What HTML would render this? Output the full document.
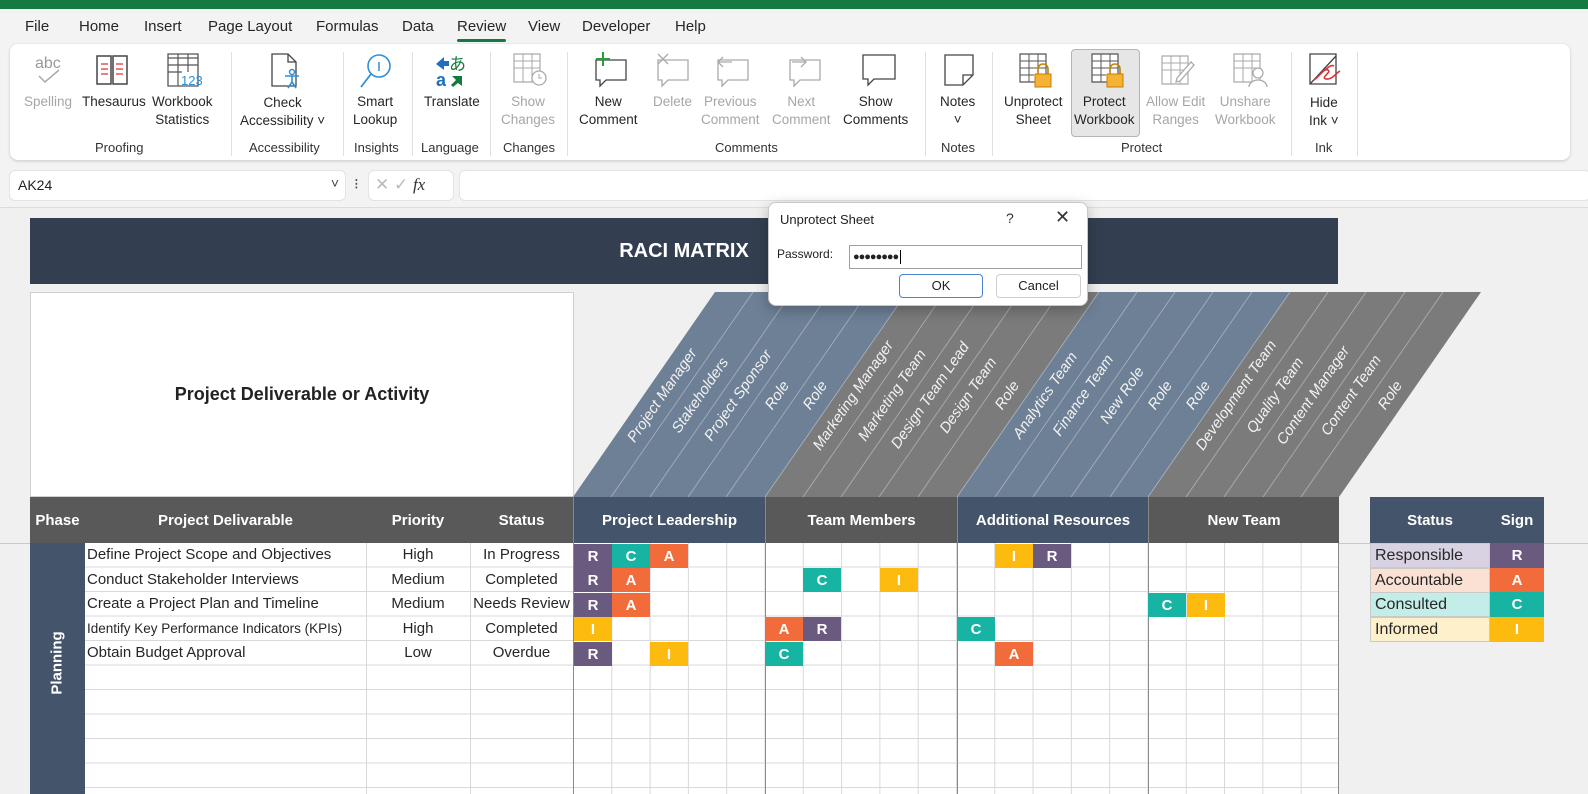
<!DOCTYPE html>
<html><head><meta charset="utf-8">
<style>
*{box-sizing:border-box;margin:0;padding:0}
body{width:1588px;height:794px;overflow:hidden;background:#f3f3f3;font-family:"Liberation Sans",sans-serif;position:relative;color:#222}
.a{position:absolute}
.tab{position:absolute;top:18px;font-size:15px;color:#262626}
.rb{position:absolute;font-size:13.5px;color:#262626;text-align:center;line-height:18px;white-space:nowrap}
.dis{color:#a6a6a6}
.gl{position:absolute;top:140px;font-size:13px;color:#333;text-align:center;white-space:nowrap}
.sep{position:absolute;top:52px;width:1px;height:104px;background:#e1e1e1}
.ic{position:absolute;top:52px}
.hd{position:absolute;top:497px;height:46px;color:#fff;font-weight:bold;font-size:15px;display:flex;align-items:center;justify-content:center}
.c{position:absolute;width:38px;height:24px;color:#fff;font-size:15px;font-weight:bold;display:flex;align-items:center;justify-content:center}
.R{background:#6b5a7f}.C{background:#17b3a3}.A{background:#f26b3a}.I{background:#fdbb0f}
.t{position:absolute;font-size:15px;color:#262626;height:24px;line-height:24px;white-space:nowrap}
</style></head><body>
<div class="a" style="left:0;top:0;width:1588px;height:9px;background:#157a41"></div>
<div class="tab" style="left:25px">File</div>
<div class="tab" style="left:79px">Home</div>
<div class="tab" style="left:144px">Insert</div>
<div class="tab" style="left:208px">Page Layout</div>
<div class="tab" style="left:316px">Formulas</div>
<div class="tab" style="left:402px">Data</div>
<div class="tab" style="left:457px">Review</div>
<div class="a" style="left:457px;top:39px;width:49px;height:3px;background:#157a41;border-radius:2px"></div>
<div class="tab" style="left:528px">View</div>
<div class="tab" style="left:582px">Developer</div>
<div class="tab" style="left:675px">Help</div>

<div class="a" style="left:10px;top:44px;width:1560px;height:116px;background:#fff;border-radius:8px;box-shadow:0 1px 3px rgba(0,0,0,.18)"></div>
<!-- icons -->
<svg class="ic" style="left:33px" width="34" height="36"><text x="2" y="16" font-size="16" fill="#999" font-family="Liberation Sans">abc</text><path d="M6 24l6 6 14-12" stroke="#aaa" fill="none" stroke-width="1.5"/></svg>
<svg class="ic" style="left:95px" width="36" height="36"><path d="M2 4h14v28H2zM18 4h14v28H18z" fill="#fff" stroke="#444" stroke-width="1.5"/><path d="M6 12h7M6 17h7M6 22h7M21 12h7M21 17h7M21 22h7" stroke="#d33" stroke-width="1.3"/></svg>
<svg class="ic" style="left:166px" width="36" height="36"><path d="M2 2h30v32H2z" fill="#fff" stroke="#555" stroke-width="1.3"/><path d="M2 6h30M2 13h30M2 20h14M12 2v32M22 2v18" stroke="#555" stroke-width="1.2"/><text x="15" y="33" font-size="13" fill="#2e8fd6" font-family="Liberation Sans">123</text></svg>
<svg class="ic" style="left:268px" width="36" height="38"><path d="M4 2h16l8 8v24H4z" fill="#fff" stroke="#444" stroke-width="1.3"/><path d="M20 2v8h8" fill="none" stroke="#444" stroke-width="1.3"/><circle cx="24" cy="20" r="2.5" fill="none" stroke="#2e8fd6" stroke-width="1.5"/><path d="M17 24h14M24 24v6l-4 6M24 30l4 6" stroke="#2e8fd6" stroke-width="1.6" fill="none"/></svg>
<svg class="ic" style="left:358px" width="36" height="38"><circle cx="21" cy="14" r="11" fill="none" stroke="#2e8fd6" stroke-width="1.6"/><path d="M13 22L3 35" stroke="#2e8fd6" stroke-width="1.8"/><path d="M21 10v9" stroke="#2e8fd6" stroke-width="1.5"/></svg>
<svg class="ic" style="left:432px" width="36" height="36"><path d="M4 12l8-7v4h5v5h-5v4z" fill="#1f6fc0"/><text x="4" y="34" font-size="18" fill="#1f6fc0" font-weight="bold" font-family="Liberation Sans">a</text><text x="17" y="18" font-size="17" fill="#157a41" font-family="Noto Sans CJK JP,sans-serif">あ</text><path d="M20 24h10v10l-4-3-5 4-2-2 5-5z" fill="#157a41"/></svg>
<svg class="ic" style="left:512px" width="36" height="36"><path d="M2 2h26v28H2z" fill="#fff" stroke="#aaa" stroke-width="1.2"/><path d="M2 9h26M2 16h26M11 2v28M20 2v28" stroke="#aaa"/><circle cx="27" cy="26" r="7" fill="#fff" stroke="#aaa" stroke-width="1.3"/><path d="M27 22v4h3" stroke="#aaa" fill="none"/></svg>
<svg class="ic" style="left:592px" width="38" height="36"><path d="M4 8h30v20H14l-6 6v-6H4z" fill="#fff" stroke="#444" stroke-width="1.3"/><path d="M11 0v14M4 7h14" stroke="#2a9d3b" stroke-width="2"/></svg>
<svg class="ic" style="left:654px" width="38" height="36"><path d="M4 8h30v20H14l-6 6v-6H4z" fill="#fff" stroke="#aaa" stroke-width="1.3"/><path d="M4 2l10 10M14 2L4 12" stroke="#aaa" stroke-width="1.3"/></svg>
<svg class="ic" style="left:714px" width="38" height="36"><path d="M4 8h30v20H14l-6 6v-6H4z" fill="#fff" stroke="#aaa" stroke-width="1.3"/><path d="M18 10H4M9 5l-5 5 5 5" stroke="#aaa" stroke-width="1.3" fill="none"/></svg>
<svg class="ic" style="left:786px" width="38" height="36"><path d="M4 8h30v20H14l-6 6v-6H4z" fill="#fff" stroke="#aaa" stroke-width="1.3"/><path d="M6 10h14M15 5l5 5-5 5" stroke="#aaa" stroke-width="1.3" fill="none"/></svg>
<svg class="ic" style="left:860px" width="38" height="36"><path d="M3 3h32v24H14l-6 6v-6H3z" fill="#fff" stroke="#444" stroke-width="1.3"/></svg>
<svg class="ic" style="left:942px" width="34" height="36"><path d="M3 3h28v20l-10 10H3z" fill="#fff" stroke="#444" stroke-width="1.3"/><path d="M31 23h-10v10" fill="none" stroke="#444" stroke-width="1.3"/></svg>
<svg class="ic" style="left:1018px" width="38" height="38"><path d="M2 2h26v28H2z" fill="#fff" stroke="#555" stroke-width="1.2"/><path d="M2 9h26M2 16h26M2 23h14M11 2v28M20 2v16" stroke="#555"/><rect x="17" y="22" width="16" height="13" fill="#f5b335" stroke="#c67f00"/><path d="M20 22v-5a5 5 0 0 1 10 0v5" fill="none" stroke="#c67f00" stroke-width="1.6"/></svg>
<div class="a" style="left:1071px;top:49px;width:69px;height:88px;background:#e6e6e6;border:1px solid #b5b5b5;border-radius:4px"></div>
<svg class="ic" style="left:1090px" width="38" height="38"><path d="M2 2h26v28H2z" fill="#fff" stroke="#555" stroke-width="1.2"/><path d="M2 9h26M2 16h26M2 23h14M11 2v28M20 2v16" stroke="#555"/><rect x="17" y="22" width="16" height="13" fill="#f5b335" stroke="#c67f00"/><path d="M20 22v-5a5 5 0 0 1 10 0v5" fill="none" stroke="#c67f00" stroke-width="1.6"/></svg>
<svg class="ic" style="left:1160px" width="38" height="38"><path d="M2 4h26v28H2z" fill="#fff" stroke="#aaa" stroke-width="1.2"/><path d="M2 11h26M2 18h26M11 4v28M20 4v28" stroke="#aaa"/><path d="M16 30l4-1 14-16-3-3-14 16z" fill="#fff" stroke="#aaa" stroke-width="1.3"/></svg>
<svg class="ic" style="left:1232px" width="38" height="38"><path d="M2 2h26v28H2z" fill="#fff" stroke="#aaa" stroke-width="1.2"/><path d="M2 9h26M2 16h26M11 2v28M20 2v28" stroke="#aaa"/><circle cx="26" cy="21" r="5" fill="#fff" stroke="#aaa" stroke-width="1.3"/><path d="M17 35a9 7 0 0 1 18 0" fill="#fff" stroke="#aaa" stroke-width="1.3"/></svg>
<svg class="ic" style="left:1308px" width="36" height="38"><path d="M2 2h26v30H2z" fill="#fff" stroke="#444" stroke-width="1.3"/><path d="M2 32L28 4" stroke="#444" stroke-width="1.3"/><path d="M6 28c6-4 10-12 14-10s-8 8-2 9 10-6 14-8M14 20c4-2 8-8 12-6" stroke="#e0323a" stroke-width="1.6" fill="none"/></svg>
<!-- labels -->
<div class="rb dis" style="left:24px;top:93px">Spelling</div>
<div class="rb" style="left:82px;top:93px">Thesaurus</div>
<div class="rb" style="left:152px;top:93px">Workbook<br>Statistics</div>
<div class="rb" style="left:240px;top:94px">Check<br>Accessibility ˅</div>
<div class="rb" style="left:353px;top:93px">Smart<br>Lookup</div>
<div class="rb" style="left:424px;top:93px">Translate</div>
<div class="rb dis" style="left:501px;top:93px">Show<br>Changes</div>
<div class="rb" style="left:579px;top:93px">New<br>Comment</div>
<div class="rb dis" style="left:653px;top:93px">Delete</div>
<div class="rb dis" style="left:701px;top:93px">Previous<br>Comment</div>
<div class="rb dis" style="left:772px;top:93px">Next<br>Comment</div>
<div class="rb" style="left:843px;top:93px">Show<br>Comments</div>
<div class="rb" style="left:940px;top:93px">Notes<br>˅</div>
<div class="rb" style="left:1004px;top:93px">Unprotect<br>Sheet</div>
<div class="rb" style="left:1074px;top:93px">Protect<br>Workbook</div>
<div class="rb dis" style="left:1146px;top:93px">Allow Edit<br>Ranges</div>
<div class="rb dis" style="left:1215px;top:93px">Unshare<br>Workbook</div>
<div class="rb" style="left:1309px;top:94px">Hide<br>Ink ˅</div>
<div class="gl" style="left:95px">Proofing</div>
<div class="gl" style="left:249px">Accessibility</div>
<div class="gl" style="left:354px">Insights</div>
<div class="gl" style="left:421px">Language</div>
<div class="gl" style="left:503px">Changes</div>
<div class="gl" style="left:715px">Comments</div>
<div class="gl" style="left:941px">Notes</div>
<div class="gl" style="left:1121px">Protect</div>
<div class="gl" style="left:1315px">Ink</div>
<div class="sep" style="left:231px"></div><div class="sep" style="left:343px"></div><div class="sep" style="left:412px"></div><div class="sep" style="left:490px"></div><div class="sep" style="left:567px"></div><div class="sep" style="left:925px"></div><div class="sep" style="left:992px"></div><div class="sep" style="left:1291px"></div><div class="sep" style="left:1357px"></div>

<!-- formula bar -->
<div class="a" style="left:10px;top:171px;width:335px;height:29px;background:#fff;border-radius:5px;box-shadow:0 0 0 1px #e3e3e3;font-size:14px;padding:6px 8px">AK24<span style="position:absolute;right:6px;top:4px;color:#444">˅</span></div>
<div class="a" style="left:354px;top:175px;font-size:15px;color:#444">⁝</div>
<div class="a" style="left:369px;top:171px;width:84px;height:29px;background:#fff;border-radius:5px;box-shadow:0 0 0 1px #e3e3e3;font-size:17px;color:#bbb;padding:4px 6px">✕ ✓ <i style="color:#333;font-family:'Liberation Serif',serif">fx</i></div>
<div class="a" style="left:460px;top:171px;width:1130px;height:29px;background:#fff;border-radius:5px;box-shadow:0 0 0 1px #e3e3e3"></div>
<div class="a" style="left:0;top:207px;width:1588px;height:1px;background:#dcdcdc"></div>
<div class="a" style="left:0;top:208px;width:1588px;height:586px;background:#f0f0f0"></div>

<!-- title -->
<div class="a" style="left:30px;top:218px;width:1308px;height:66px;background:#333f50;color:#fff;font-weight:bold;font-size:20px;display:flex;align-items:center;justify-content:center">RACI MATRIX</div>
<div class="a" style="left:30px;top:292px;width:544px;height:205px;background:#fff;border:1px solid #d0d0d0;font-weight:bold;font-size:18px;display:flex;align-items:center;justify-content:center;padding-left:0">Project Deliverable or Activity</div>

<svg class="a" style="left:0;top:0" width="1588" height="794">
<polygon points="573,497 765,497 907,292 715,292" fill="#6e8096"/>
<polygon points="765,497 957,497 1099,292 907,292" fill="#7b7b7b"/>
<polygon points="957,497 1148,497 1290,292 1099,292" fill="#6e8096"/>
<polygon points="1148,497 1339,497 1481,292 1290,292" fill="#7b7b7b"/>
<g stroke="#b8c0cb" stroke-width="0.8" opacity="0.8">
<line x1="611" y1="497" x2="753" y2="292"/><line x1="650" y1="497" x2="792" y2="292"/><line x1="688" y1="497" x2="830" y2="292"/><line x1="726" y1="497" x2="868" y2="292"/><line x1="765" y1="497" x2="907" y2="292"/>
<line x1="803" y1="497" x2="945" y2="292"/><line x1="841" y1="497" x2="983" y2="292"/><line x1="879" y1="497" x2="1021" y2="292"/><line x1="918" y1="497" x2="1060" y2="292"/><line x1="957" y1="497" x2="1099" y2="292"/>
<line x1="995" y1="497" x2="1137" y2="292"/><line x1="1033" y1="497" x2="1175" y2="292"/><line x1="1071" y1="497" x2="1213" y2="292"/><line x1="1110" y1="497" x2="1252" y2="292"/><line x1="1148" y1="497" x2="1290" y2="292"/>
<line x1="1186" y1="497" x2="1328" y2="292"/><line x1="1224" y1="497" x2="1366" y2="292"/><line x1="1263" y1="497" x2="1405" y2="292"/><line x1="1301" y1="497" x2="1443" y2="292"/>
</g>
<g fill="#f2f2f2" font-size="15" font-style="italic" font-family="Liberation Sans" text-anchor="middle">
<text transform="translate(666,398) rotate(-55.3)">Project Manager</text>
<text transform="translate(704,398) rotate(-55.3)">Stakeholders</text>
<text transform="translate(742,398) rotate(-55.3)">Project Sponsor</text>
<text transform="translate(781,398) rotate(-55.3)">Role</text>
<text transform="translate(819,398) rotate(-55.3)">Role</text>
<text transform="translate(857,398) rotate(-55.3)">Marketing Manager</text>
<text transform="translate(896,398) rotate(-55.3)">Marketing Team</text>
<text transform="translate(934,398) rotate(-55.3)">Design Team Lead</text>
<text transform="translate(972,398) rotate(-55.3)">Design Team</text>
<text transform="translate(1011,398) rotate(-55.3)">Role</text>
<text transform="translate(1049,398) rotate(-55.3)">Analytics Team</text>
<text transform="translate(1087,398) rotate(-55.3)">Finance Team</text>
<text transform="translate(1126,398) rotate(-55.3)">New Role</text>
<text transform="translate(1164,398) rotate(-55.3)">Role</text>
<text transform="translate(1202,398) rotate(-55.3)">Role</text>
<text transform="translate(1240,398) rotate(-55.3)">Development Team</text>
<text transform="translate(1279,398) rotate(-55.3)">Quality Team</text>
<text transform="translate(1317,398) rotate(-55.3)">Content Manager</text>
<text transform="translate(1355,398) rotate(-55.3)">Content Team</text>
<text transform="translate(1394,398) rotate(-55.3)">Role</text>
</g>
</svg>

<!-- headers -->
<div class="hd" style="left:30px;width:543px;background:#595959"></div>
<div class="hd" style="left:30px;width:55px">Phase</div>
<div class="hd" style="left:85px;width:281px">Project Delivarable</div>
<div class="hd" style="left:366px;width:104px">Priority</div>
<div class="hd" style="left:470px;width:103px">Status</div>
<div class="hd" style="left:573px;width:192px;background:#44546a;border-left:1px solid #888">Project Leadership</div>
<div class="hd" style="left:765px;width:192px;background:#595959;border-left:1px solid #888">Team Members</div>
<div class="hd" style="left:957px;width:191px;background:#44546a;border-left:1px solid #888">Additional Resources</div>
<div class="hd" style="left:1148px;width:191px;background:#595959;border-left:1px solid #888">New Team</div>
<div class="hd" style="left:1370px;width:120px;background:#44546a">Status</div>
<div class="hd" style="left:1490px;width:54px;background:#44546a">Sign</div>
<div class="a" style="left:0;top:543px;width:1588px;height:1px;background:#c8c8c8"></div>

<!-- grid -->
<div class="a" style="left:85px;top:543px;width:1254px;height:251px;background-color:#fff;
background-image:linear-gradient(#d9d9d9 1px,transparent 1px);background-size:100% 24.5px;background-position:0 -1px"></div>
<div class="a" style="left:573px;top:543px;width:766px;height:251px;
background-image:linear-gradient(90deg,#d9d9d9 1px,transparent 1px);background-size:38.3px 100%"></div>
<div class="a" style="left:366px;top:543px;width:1px;height:251px;background:#d9d9d9"></div>
<div class="a" style="left:470px;top:543px;width:1px;height:251px;background:#d9d9d9"></div>
<div class="a" style="left:573px;top:543px;width:1px;height:251px;background:#8a8a8a"></div>
<div class="a" style="left:765px;top:543px;width:1px;height:251px;background:#8a8a8a"></div>
<div class="a" style="left:957px;top:543px;width:1px;height:251px;background:#8a8a8a"></div>
<div class="a" style="left:1148px;top:543px;width:1px;height:251px;background:#8a8a8a"></div>
<div class="a" style="left:1338px;top:543px;width:1px;height:251px;background:#8a8a8a"></div>
<div class="a" style="left:30px;top:543px;width:55px;height:251px;background:#44546a"></div>
<div class="a" style="left:57px;top:663px;transform:translate(-50%,-50%) rotate(-90deg);color:#fff;font-weight:bold;font-size:15px">Planning</div>

<div class="t" style="left:87px;top:543px">Define Project Scope and Objectives</div>
<div class="t" style="left:87px;top:568px">Conduct Stakeholder Interviews</div>
<div class="t" style="left:87px;top:592px">Create a Project Plan and Timeline</div>
<div class="t" style="left:87px;top:617px;font-size:13.5px">Identify Key Performance Indicators (KPIs)</div>
<div class="t" style="left:87px;top:641px">Obtain Budget Approval</div>
<div class="t" style="left:366px;width:104px;text-align:center;top:543px">High</div>
<div class="t" style="left:366px;width:104px;text-align:center;top:568px">Medium</div>
<div class="t" style="left:366px;width:104px;text-align:center;top:592px">Medium</div>
<div class="t" style="left:366px;width:104px;text-align:center;top:617px">High</div>
<div class="t" style="left:366px;width:104px;text-align:center;top:641px">Low</div>
<div class="t" style="left:470px;width:103px;text-align:center;top:543px">In Progress</div>
<div class="t" style="left:470px;width:103px;text-align:center;top:568px">Completed</div>
<div class="t" style="left:470px;width:103px;text-align:center;top:592px">Needs Review</div>
<div class="t" style="left:470px;width:103px;text-align:center;top:617px">Completed</div>
<div class="t" style="left:470px;width:103px;text-align:center;top:641px">Overdue</div>

<div class="c R" style="left:574px;top:544px">R</div><div class="c C" style="left:612px;top:544px">C</div><div class="c A" style="left:650px;top:544px">A</div>
<div class="c I" style="left:995px;top:544px">I</div><div class="c R" style="left:1033px;top:544px">R</div>
<div class="c R" style="left:574px;top:568px">R</div><div class="c A" style="left:612px;top:568px">A</div>
<div class="c C" style="left:803px;top:568px">C</div><div class="c I" style="left:880px;top:568px">I</div>
<div class="c R" style="left:574px;top:593px">R</div><div class="c A" style="left:612px;top:593px">A</div>
<div class="c C" style="left:1148px;top:593px">C</div><div class="c I" style="left:1187px;top:593px">I</div>
<div class="c I" style="left:574px;top:617px">I</div>
<div class="c A" style="left:765px;top:617px">A</div><div class="c R" style="left:803px;top:617px">R</div>
<div class="c C" style="left:957px;top:617px">C</div>
<div class="c R" style="left:574px;top:642px">R</div><div class="c I" style="left:650px;top:642px">I</div>
<div class="c C" style="left:765px;top:642px">C</div>
<div class="c A" style="left:995px;top:642px">A</div>

<!-- legend -->
<div class="t" style="left:1370px;top:543px;width:120px;height:25px;background:#d9d2e3;padding-left:4px;font-size:16px;border:1px solid #c9c9c9">Responsible</div>
<div class="t" style="left:1370px;top:568px;width:120px;height:25px;background:#fbe1d3;padding-left:4px;font-size:16px;border:1px solid #c9c9c9">Accountable</div>
<div class="t" style="left:1370px;top:592px;width:120px;height:25px;background:#c3ede8;padding-left:4px;font-size:16px;border:1px solid #c9c9c9">Consulted</div>
<div class="t" style="left:1370px;top:617px;width:120px;height:25px;background:#fff0cc;padding-left:4px;font-size:16px;border:1px solid #c9c9c9">Informed</div>
<div class="c R" style="left:1490px;top:543px;width:54px;height:25px">R</div>
<div class="c A" style="left:1490px;top:568px;width:54px;height:25px">A</div>
<div class="c C" style="left:1490px;top:592px;width:54px;height:25px">C</div>
<div class="c I" style="left:1490px;top:617px;width:54px;height:25px">I</div>

<!-- dialog -->
<div class="a" style="left:768px;top:202px;width:320px;height:104px;background:#fff;border:1px solid #c8c8c8;border-radius:8px;box-shadow:0 4px 14px rgba(0,0,0,.25)">
<div class="a" style="left:11px;top:9px;font-size:13px;color:#222">Unprotect Sheet</div>
<div class="a" style="left:237px;top:7px;font-size:14px;color:#333">?</div>
<div class="a" style="left:286px;top:4px;font-size:18px;color:#333">✕</div>
<div class="a" style="left:8px;top:44px;font-size:12px;color:#222">Password:</div>
<div class="a" style="left:80px;top:42px;width:233px;height:24px;border:1px solid #a0a0a0;font-size:11px;padding:4px 3px;letter-spacing:-1px">●●●●●●●●<span style="display:inline-block;width:1px;height:14px;background:#000;vertical-align:middle;margin-left:2px"></span></div>
<div class="a" style="left:130px;top:71px;width:84px;height:24px;border:1px solid #4a84d0;border-radius:4px;font-size:13px;text-align:center;line-height:22px">OK</div>
<div class="a" style="left:227px;top:71px;width:85px;height:24px;border:1px solid #cfcfcf;border-radius:4px;font-size:13px;text-align:center;line-height:22px">Cancel</div>
</div>
</body></html>
